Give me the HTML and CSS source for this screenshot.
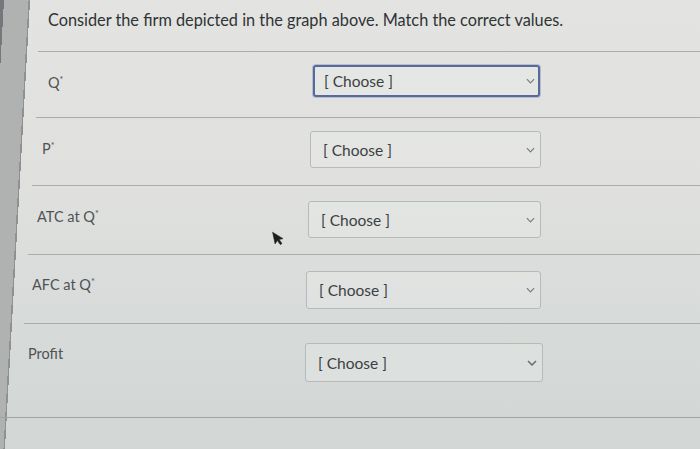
FILE: index.html
```html
<!DOCTYPE html>
<html lang="en">
<head>
<meta charset="utf-8">
<title>Match the correct values</title>
<link rel="stylesheet" href="styles.css">
</head>
<body>
<div class="page">
  <h1 class="title">Consider the firm depicted in the graph above. Match the correct values.</h1>
  <div class="rows">
    <div class="row r1">
      <div class="label">Q<sup>*</sup></div>
      <div class="select focused"><span class="value">[ Choose ]</span>
        <svg class="chev" viewBox="0 0 10 6" width="9" height="6"><path d="M1 1l4 4 4-4" fill="none" stroke="#7a7d80" stroke-width="1.3"/></svg>
      </div>
    </div>
    <div class="row r2">
      <div class="label">P<sup>*</sup></div>
      <div class="select"><span class="value">[ Choose ]</span>
        <svg class="chev" viewBox="0 0 10 6" width="9" height="6"><path d="M1 1l4 4 4-4" fill="none" stroke="#7a7d80" stroke-width="1.3"/></svg>
      </div>
    </div>
    <div class="row r3">
      <div class="label">ATC at Q<sup>*</sup></div>
      <div class="select"><span class="value">[ Choose ]</span>
        <svg class="chev" viewBox="0 0 10 6" width="9" height="6"><path d="M1 1l4 4 4-4" fill="none" stroke="#7a7d80" stroke-width="1.3"/></svg>
      </div>
    </div>
    <div class="row r4">
      <div class="label">AFC at Q<sup>*</sup></div>
      <div class="select"><span class="value">[ Choose ]</span>
        <svg class="chev" viewBox="0 0 10 6" width="9" height="6"><path d="M1 1l4 4 4-4" fill="none" stroke="#7a7d80" stroke-width="1.3"/></svg>
      </div>
    </div>
    <div class="row r5">
      <div class="label">Profit</div>
      <div class="select"><span class="value">[ Choose ]</span>
        <svg class="chev" viewBox="0 0 10 6" width="10" height="6"><path d="M1 1l4 4 4-4" fill="none" stroke="#6a6d70" stroke-width="1.5"/></svg>
      </div>
    </div>
  </div>
  <div class="bottom-line"></div>
  <svg class="cursor" viewBox="0 0 12 17" width="11" height="16"><path d="M1 1v13l3.2-3 2.3 5 2-0.9-2.2-4.9h4.4z" fill="#1c1d1f" stroke="#2a2b2d" stroke-width="0.6"/></svg>
</div>
</body>
</html>
```
FILE: styles.css
```css
* { box-sizing: border-box; }
html, body { margin: 0; padding: 0; }
body {
  font-family: Lato, "Liberation Sans", sans-serif;
  color: #3b3e40;
}
.page {
  position: relative;
  width: 700px;
  height: 449px;
  overflow: hidden;
  background:
    linear-gradient(93.2deg, #75787a 0 4px, #b0b2b2 4px 28.5px, #8e9091 28.5px 30px, transparent 30px),
    linear-gradient(180deg, #e3e4e2 0%, #e0e1df 40%, #d6dad8 75%, #d2d7d5 100%);
}
.title {
  margin: 0;
  padding: 10px 0 0 48px;
  font-size: 16.3px;
  line-height: 20px;
  font-weight: 400;
  color: #2f3334;
  height: 51px;
}
.rows { display: flex; flex-direction: column; }
.row {
  display: flex;
  align-items: flex-start;
  border-top: 1px solid #a9acab;
  padding-top: 13px;
}
.label {
  font-size: 14.5px;
  line-height: 18px;
  color: #4f5355;
  margin-top: 9px;
  padding-left: 6px;
  flex: none;
}
.label sup { font-size: 9px; vertical-align: 5px; line-height: 0; }
.select {
  flex: none;
  height: 37px;
  border: 1px solid #b7bab9;
  border-radius: 3px;
  background: rgba(236, 238, 236, 0.35);
  display: flex;
  align-items: center;
  justify-content: space-between;
  padding: 0 5px 0 12px;
  font-size: 15.5px;
  color: #3d4042;
}
.select.focused {
  border: 2px solid #58699a;
  box-shadow: 0 0 0 1px #b6bdd0;
  height: 32px;
  border-radius: 3px;
  padding-left: 9px;
  padding-right: 3px;
}
.chev { flex: none; }

.r1 { margin-left: 38px; height: 66px; }
.r1 .label { width: 275px; padding-left: 10px; }
.r1 .select { width: 227px; }

.r2 { margin-left: 36px; height: 68px; }
.r2 .label { width: 274px; }
.r2 .select { width: 231px; }

.r3 { margin-left: 32px; height: 69px; padding-top: 15px; }
.r3 .label { width: 276px; margin-top: 7px; padding-left: 5px; }
.r3 .select { width: 233px; }

.r4 { margin-left: 28px; height: 69px; padding-top: 16px; }
.r4 .label { width: 278px; margin-top: 5px; padding-left: 4px; }
.r4 .select { width: 235px; height: 38px; }

.r5 { margin-left: 24px; height: 94px; padding-top: 19px; }
.r5 .label { width: 281px; margin-top: 2px; padding-left: 4px; }
.r5 .select { width: 238px; height: 39px; }

.bottom-line {
  border-top: 1px solid #9fa3a2;
}
.cursor {
  position: absolute;
  left: 273px;
  top: 230px;
  transform: rotate(-12deg);
}
```
